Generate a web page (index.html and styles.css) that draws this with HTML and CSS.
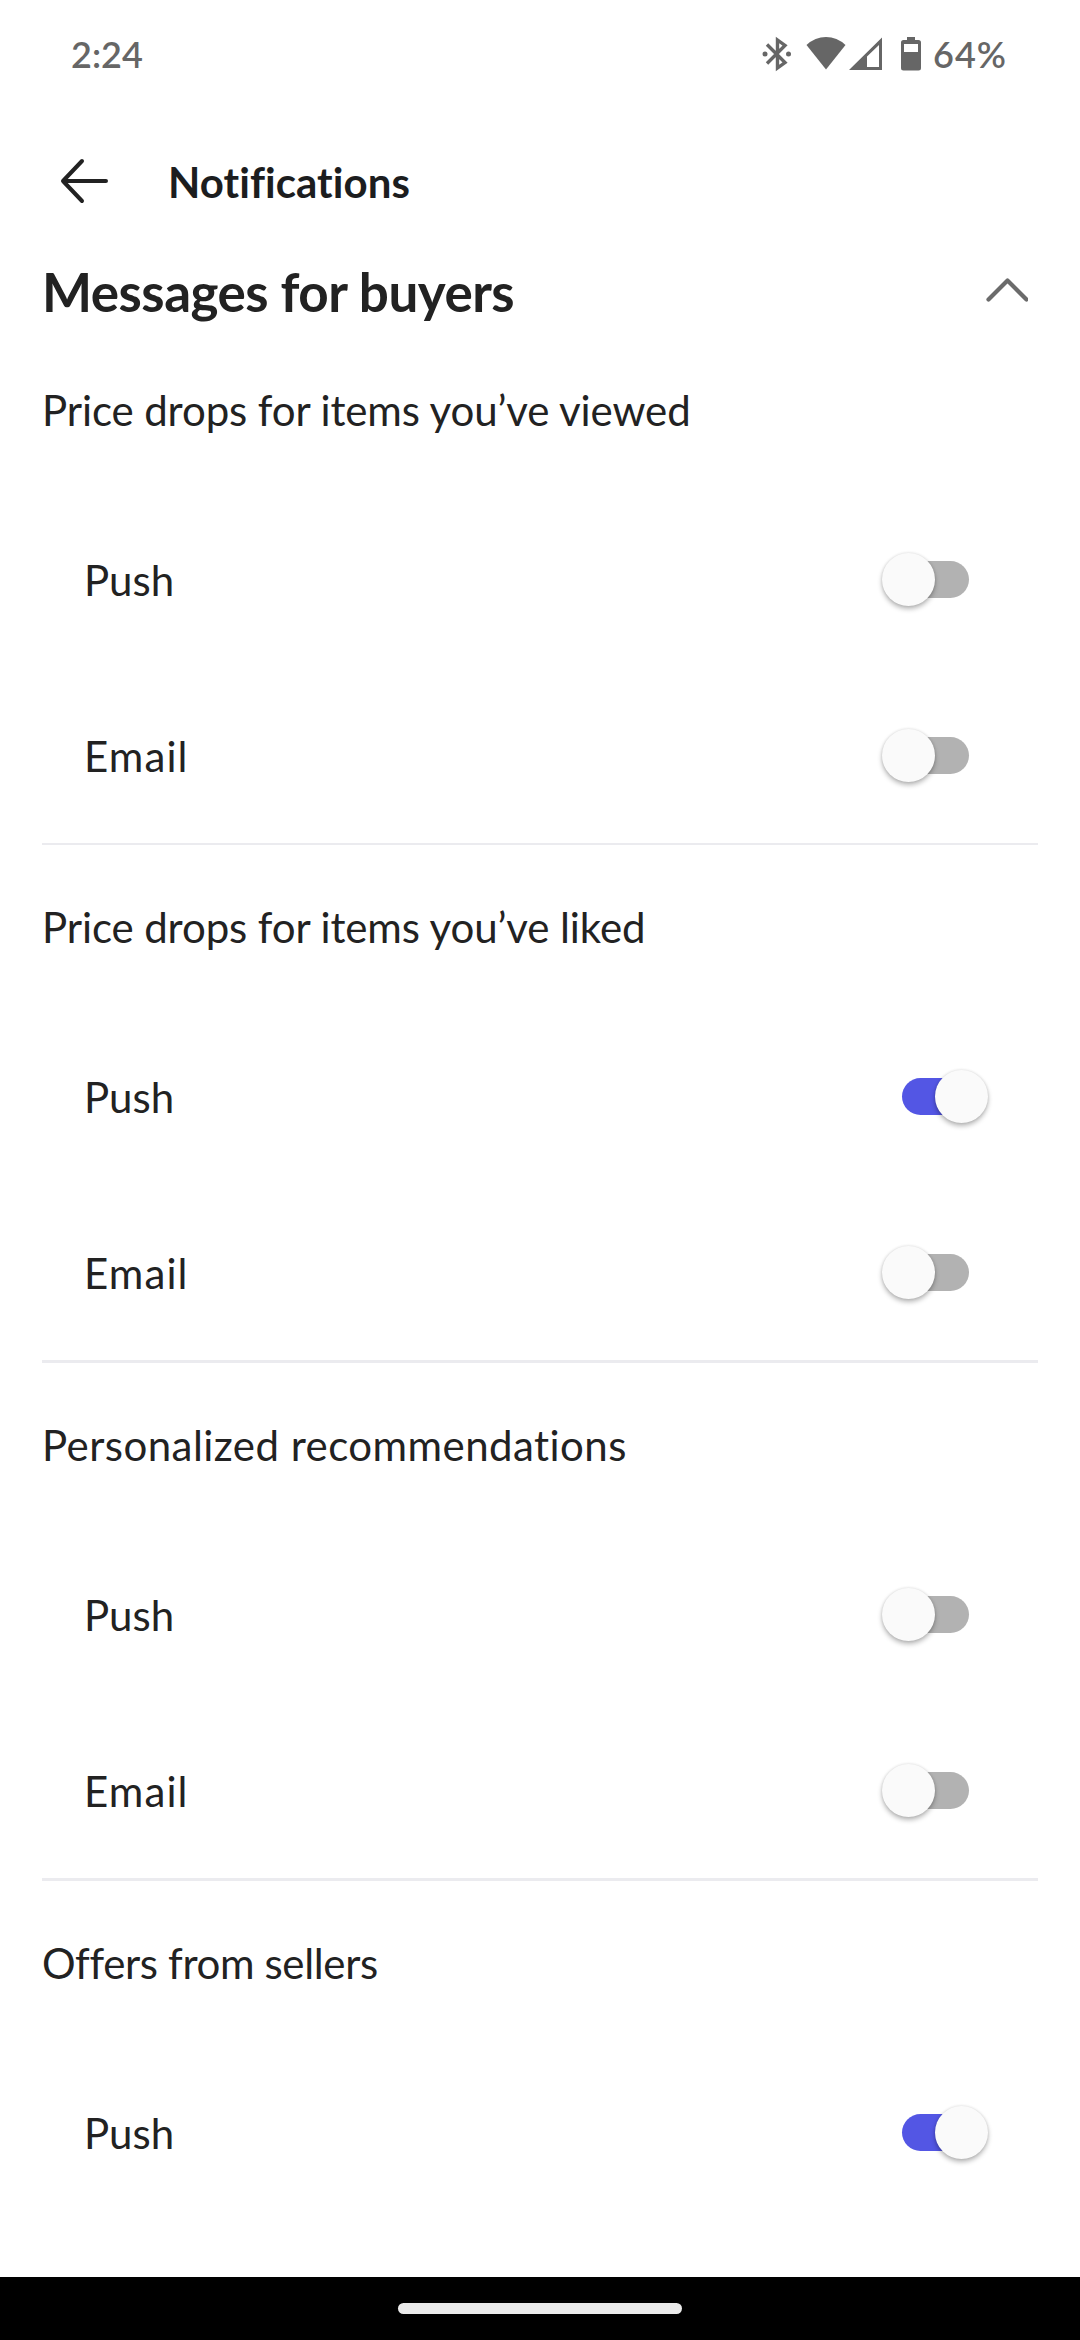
FILE: index.html
```html
<!DOCTYPE html>
<html lang="en">
<head>
<meta charset="utf-8">
<title>Notifications</title>
<link rel="stylesheet" href="styles.css">
</head>
<body>
<div class="screen">
  <div class="status">
    <span class="clock">2:24</span>
    <div class="status-icons">
      <svg class="bluetooth" width="30" height="36" viewBox="0 0 30 36"><path d="M5 8.500L23 26.500L15.500 32V4L23 9.500L5 27.500" fill="none" stroke="currentColor" stroke-width="3.400"/><circle cx="3" cy="18" r="2.500" fill="currentColor"/><circle cx="26.500" cy="18" r="2.500" fill="currentColor"/></svg>
      <svg class="wifi" width="40" height="36" viewBox="0 0 40 36"><path d="M.5 9Q9 1 20 1T39.500 9L20 33.500Z" fill="currentColor"/></svg>
      <svg class="signal" width="33" height="36" viewBox="0 0 33 36"><path fill-rule="evenodd" d="M0 34L33 1.500V34ZM18 31H30V9L18 20.500Z" fill="currentColor"/></svg>
      <svg class="battery" width="20" height="36" viewBox="0 0 20 36"><path fill-rule="evenodd" d="M6 1H14V4H17.500Q20 4 20 6.500V32Q20 34.500 17.500 34.500H2.500Q0 34.500 0 32V6.500Q0 4 2.500 4H6ZM3 8V16H17V8Z" fill="currentColor"/></svg>
      <span class="percent">64%</span>
    </div>
  </div>
  <header class="appbar">
    <svg width="48" height="46" viewBox="0 0 48 46"><path d="M22 3L3 23L22 43M3 23H46" fill="none" stroke="currentColor" stroke-width="4" stroke-linecap="round" stroke-linejoin="round"/></svg>
    <h1>Notifications</h1>
  </header>
  <main>
    <div class="group-title">
      <h2>Messages for buyers</h2>
      <svg width="42" height="24" viewBox="0 0 42 24"><path d="M2.500 21.500L21.500 2.500L40.500 21.500" fill="none" stroke="currentColor" stroke-width="4.200" stroke-linecap="round" stroke-linejoin="round"/></svg>
    </div>
    <section class="thin">
      <h3 class="price">Price drops for items you’ve viewed</h3>
      <div class="row"><span>Push</span><i class="switch"></i></div>
      <div class="row"><span class="email">Email</span><i class="switch"></i></div>
    </section>
    <section>
      <h3 class="price">Price drops for items you’ve liked</h3>
      <div class="row"><span>Push</span><i class="switch on"></i></div>
      <div class="row"><span class="email">Email</span><i class="switch"></i></div>
    </section>
    <section>
      <h3 class="wide">Personalized recommendations</h3>
      <div class="row"><span>Push</span><i class="switch"></i></div>
      <div class="row"><span class="email">Email</span><i class="switch"></i></div>
    </section>
    <section>
      <h3 class="tight">Offers from sellers</h3>
      <div class="row"><span>Push</span><i class="switch on"></i></div>
    </section>
  </main>
  <footer class="navbar"><div class="pill"></div></footer>
</div>
</body>
</html>
```
FILE: styles.css
```css
* { box-sizing: border-box; margin: 0; }
body { background: #fff; font-family: Lato, sans-serif; font-size: 42px; color: #222; font-variant-ligatures: none; }
svg { display: block; flex: none; }
h1, h2, h3 { font-weight: 400; font-size: 42px; white-space: nowrap; }
.screen { width: 1080px; height: 2340px; display: flex; flex-direction: column; overflow: hidden; }
.status { height: 108px; flex: none; display: flex; justify-content: space-between; align-items: center; padding: 0 73px 0 71px; color: #666; font-size: 36px; font-weight: 600; }
.clock, .percent { line-height: 44px; margin-top: -1px; }
.status-icons { display: flex; align-items: center; }
.wifi { margin-left: 14px; }
.signal { margin-left: 3px; }
.battery { margin-left: 19px; }
.percent { width: 74px; margin-left: 12px; white-space: nowrap; letter-spacing: 1px; }
.appbar { height: 146px; flex: none; display: flex; align-items: center; gap: 60px; padding-left: 60px; }
.appbar h1 { font-weight: 700; color: #1c1d1e; padding-top: 1px; letter-spacing: .05px; }
main { flex: 1; min-height: 0; overflow: hidden; padding: 0 42px; }
.group-title { height: 74px; display: flex; align-items: center; justify-content: space-between; padding-right: 10px; }
.group-title h2 { font-size: 53px; font-weight: 700; line-height: 64px; letter-spacing: -.5px; padding-top: 2px; }
.group-title svg { color: #6b6b6b; margin-top: -2px; }
section { border-bottom: 3px solid #ebebef; }
section.thin { border-bottom-width: 2px; }
section:last-child { border: 0; }
h3 { padding: 57px 0 56px; line-height: 50px; }
.price { letter-spacing: -.1px; }
.wide { letter-spacing: .45px; }
.tight { letter-spacing: -.35px; }
.email { letter-spacing: 1.1px; }
.row { height: 176px; display: flex; align-items: center; justify-content: space-between; padding: 0 50px 0 42px; }
.row span { padding-top: 1px; }
.switch { display: flex; align-items: center; width: 106px; height: 53px; padding: 0 19.500px; }
.switch::before { content: ""; flex: none; width: 67px; height: 37px; border-radius: 19px; background: #b2b2b2; }
.switch::after { content: ""; flex: none; width: 53px; height: 53px; margin-left: -86.500px; border-radius: 50%; background: #fafafa; box-shadow: 0 3px 5px rgba(0,0,0,.28), 0 0 3px rgba(0,0,0,.12); }
.switch.on::before { background: #5356e4; }
.switch.on::after { margin-left: -33.500px; }
.navbar { height: 63px; flex: none; background: #000; display: flex; justify-content: center; align-items: center; }
.pill { width: 284px; height: 11px; border-radius: 6px; background: #ebebeb; }
```
